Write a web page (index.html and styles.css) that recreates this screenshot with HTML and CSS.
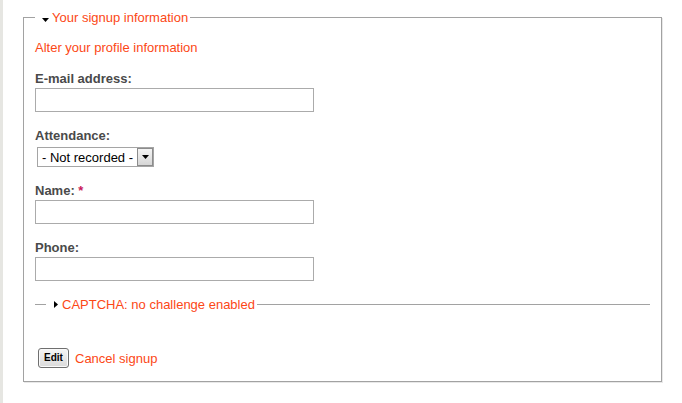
FILE: index.html
```html
<!DOCTYPE html>
<html lang="en">
<head>
<meta charset="utf-8">
<title>Your signup information</title>
<link rel="stylesheet" href="styles.css">
</head>
<body>
<div class="page">
  <form class="signup-form">
    <fieldset class="outer">
      <legend><a class="legend-link" href="#"><svg class="tw-down" width="7" height="4" viewBox="0 0 7 4"><path d="M0 0H7L3.5 4Z" fill="#000"/></svg>Your signup information</a></legend>
      <div class="desc">Alter your profile information</div>
      <div class="form-item">
        <label for="email">E-mail address:</label>
        <input class="text" id="email" type="text">
      </div>
      <div class="form-item">
        <label for="att">Attendance:</label>
        <div class="select-wrap">
          <select id="att" class="select"><option>- Not recorded -</option></select>
          <span class="select-btn"><svg width="7" height="4" viewBox="0 0 7 4"><path d="M0 0H7L3.5 4Z" fill="#000"/></svg></span>
        </div>
      </div>
      <div class="form-item">
        <label for="name">Name: <span class="req">*</span></label>
        <input class="text" id="name" type="text">
      </div>
      <div class="form-item">
        <label for="phone">Phone:</label>
        <input class="text" id="phone" type="text">
      </div>
      <fieldset class="captcha">
        <legend><a class="legend-link" href="#"><svg class="tw-right" width="4" height="7" viewBox="0 0 4 7"><path d="M0 0L4 3.5L0 7Z" fill="#000"/></svg>CAPTCHA: no challenge enabled</a></legend>
      </fieldset>
      <div class="actions">
        <button type="button" class="btn">Edit</button>
        <a class="cancel" href="#">Cancel signup</a>
      </div>
    </fieldset>
  </form>
</div>
</body>
</html>
```

FILE: styles.css
```css
html, body {
  margin: 0;
  padding: 0;
  background: #fff;
}
body {
  font-family: "Liberation Sans", Arial, sans-serif;
  font-size: 13px;
  line-height: 15px;
}
.page {
  border-left: 3px solid #e6e6e2;
  padding: 10px 20px 0 20px;
  min-height: 403px;
  box-sizing: border-box;
}
.signup-form {
  margin: 0;
}
.outer {
  margin: 0;
  border: 1px solid #a2a2a2;
  padding: 0 11px 13px 11px;
  box-shadow: 1px 1px 0 #e8e8e8;
  min-inline-size: 0;
}
legend {
  padding: 0 2px;
  line-height: 15px;
  font-size: 13px;
}
.legend-link {
  color: #fc4716;
  text-decoration: none;
}
.tw-down {
  display: inline-block;
  vertical-align: baseline;
  margin: 0 3px 0 5px;
}
.tw-right {
  display: inline-block;
  vertical-align: 1px;
  margin: 0 4px 0 6px;
}
.desc {
  margin-top: 15px;
  margin-bottom: 4px;
  color: #fc4716;
}
.form-item {
  margin-top: 16px;
}
.form-item label {
  display: block;
  font-weight: bold;
  color: #4a4a4a;
  line-height: 15px;
}
.req {
  color: #c8185a;
}
.text {
  display: block;
  box-sizing: border-box;
  width: 279px;
  height: 24px;
  margin: 2px 0 0 0;
  border: 1px solid #ababab;
  padding: 2px 3px;
  font-family: "Liberation Sans", Arial, sans-serif;
  font-size: 13px;
  background: #fff;
}
.select-wrap {
  position: relative;
  display: block;
  width: 117px;
  height: 20px;
  margin: 4px 0 2px 2px;
}
.select {
  appearance: none;
  -webkit-appearance: none;
  box-sizing: border-box;
  width: 100%;
  height: 100%;
  margin: 0;
  border: 1px solid #a5a5a5;
  border-radius: 0;
  padding: 0 0 0 4px;
  background: #fff;
  color: #000;
  font-family: "Liberation Sans", Arial, sans-serif;
  font-size: 13px;
}
.select-btn {
  position: absolute;
  top: 1px;
  right: 1px;
  box-sizing: border-box;
  width: 16px;
  height: 18px;
  border: 1px solid #8c8c8c;
  background: linear-gradient(#f4f4f4, #d6d6d6);
  display: flex;
  align-items: center;
  justify-content: center;
  pointer-events: none;
}
.captcha {
  margin: 16px 0 0 0;
  border: 0;
  border-top: 1px solid #a2a2a2;
  padding: 0 0 0 11px;
  min-inline-size: 0;
}
.actions {
  margin-top: 36px;
  display: flex;
  align-items: center;
  gap: 6px;
}
.btn {
  box-sizing: border-box;
  width: 31px;
  height: 20px;
  margin: 0 0 0 3px;
  padding: 0;
  border: 1px solid #6f6f6f;
  border-radius: 3px;
  background: linear-gradient(#f6f6f6, #dadada);
  box-shadow: inset 0 0 0 1px #fafafa;
  font-family: "Liberation Sans", Arial, sans-serif;
  font-size: 10px;
  font-weight: bold;
  color: #000;
  line-height: 16px;
}
.cancel {
  color: #fc4716;
  text-decoration: none;
  font-size: 13px;
}
```
